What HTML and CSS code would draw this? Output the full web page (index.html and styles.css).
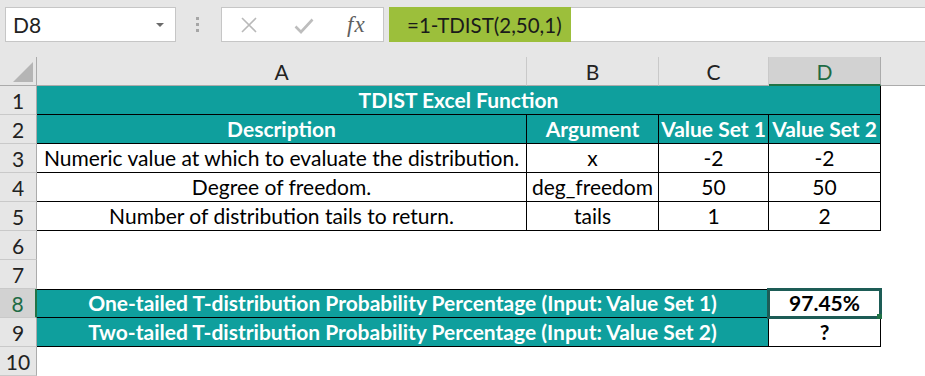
FILE: index.html
```html
<!DOCTYPE html>
<html lang="en">
<head>
<meta charset="utf-8">
<title>TDIST Excel Function</title>
<link rel="stylesheet" href="styles.css">
</head>
<body>
<div class="app">
  <div class="toolbar">
    <div class="namebox">
      <span class="ref">D8</span>
      <span class="caret"></span>
    </div>
    <div class="grip"><i></i><i></i><i></i></div>
    <div class="fbuttons">
      <svg class="ico-x" width="18" height="18" viewBox="0 0 18 18"><path d="M2 2 L16 16 M16 2 L2 16" stroke="#b9b9b9" stroke-width="1.6" fill="none"/></svg>
      <svg class="ico-ok" width="20" height="16" viewBox="0 0 20 16"><path d="M1.5 8.5 L7 14 L18.5 1.5" stroke="#bdbdbd" stroke-width="2.6" fill="none" stroke-linejoin="miter"/></svg>
      <span class="fx">fx</span>
    </div>
    <div class="formula"><span class="fval">=1-TDIST(2,50,1)</span></div>
  </div>

  <div class="sheet">
    <!-- column headers -->
    <div class="corner"><span class="tri"></span></div>
    <div class="colhead">A</div>
    <div class="colhead">B</div>
    <div class="colhead">C</div>
    <div class="colhead sel">D</div>
    <div class="colhead rest"></div>

    <!-- row 1 -->
    <div class="rowhead">1</div>
    <div class="cell teal bold span4 b-r b-b">TDIST Excel Function</div>
    <div class="cell"></div>

    <!-- row 2 -->
    <div class="rowhead">2</div>
    <div class="cell teal bold b-r b-b">Description</div>
    <div class="cell teal bold b-r b-b">Argument</div>
    <div class="cell teal bold b-r b-b">Value Set 1</div>
    <div class="cell teal bold b-r b-b">Value Set 2</div>
    <div class="cell"></div>

    <!-- row 3 -->
    <div class="rowhead">3</div>
    <div class="cell b-r b-b">Numeric value at which to evaluate the distribution.</div>
    <div class="cell b-r b-b">x</div>
    <div class="cell b-r b-b">-2</div>
    <div class="cell b-r b-b">-2</div>
    <div class="cell"></div>

    <!-- row 4 -->
    <div class="rowhead">4</div>
    <div class="cell b-r b-b">Degree of freedom.</div>
    <div class="cell b-r b-b">deg_freedom</div>
    <div class="cell b-r b-b">50</div>
    <div class="cell b-r b-b">50</div>
    <div class="cell"></div>

    <!-- row 5 -->
    <div class="rowhead">5</div>
    <div class="cell b-r b-b">Number of distribution tails to return.</div>
    <div class="cell b-r b-b">tails</div>
    <div class="cell b-r b-b">1</div>
    <div class="cell b-r b-b">2</div>
    <div class="cell"></div>

    <!-- rows 6-7 -->
    <div class="rowhead">6</div>
    <div class="cell span5"></div>
    <div class="rowhead">7</div>
    <div class="cell span5"></div>

    <!-- row 8 -->
    <div class="rowhead sel">8</div>
    <div class="cell teal bold span3 b-t b-r b-b">One-tailed T-distribution Probability Percentage (Input: Value Set 1)</div>
    <div class="cell bold b-t b-r b-b active">97.45%</div>
    <div class="cell"></div>

    <!-- row 9 -->
    <div class="rowhead">9</div>
    <div class="cell teal bold span3 b-r b-b">Two-tailed T-distribution Probability Percentage (Input: Value Set 2)</div>
    <div class="cell bold b-r b-b">?</div>
    <div class="cell"></div>

    <!-- row 10 -->
    <div class="rowhead">10</div>
    <div class="cell span5"></div>
  </div>
</div>
</body>
</html>
```

FILE: styles.css
```css
* { box-sizing: border-box; }

html, body {
  margin: 0;
  padding: 0;
}

body {
  width: 925px;
  height: 376px;
  overflow: hidden;
  background: #e6e6e6;
  font-family: "Lato", "Liberation Sans", sans-serif;
}

/* ---------- formula bar ---------- */
.toolbar {
  height: 57px;
  display: flex;
  align-items: flex-start;
  padding-top: 7px;
}

.namebox {
  margin-left: 5px;
  width: 171px;
  height: 35px;
  background: #fff;
  border: 1px solid #c6c6c6;
  display: flex;
  align-items: center;
  justify-content: space-between;
  padding: 0 11px 0 7px;
}

.namebox .ref {
  font-size: 21px;
  color: #222;
}

.caret {
  width: 0;
  height: 0;
  border-left: 4px solid transparent;
  border-right: 4px solid transparent;
  border-top: 4px solid #6a6a6a;
}

.grip {
  width: 45px;
  height: 35px;
  display: flex;
  flex-direction: column;
  align-items: center;
  justify-content: center;
  gap: 3px;
  padding-right: 2px;
}

.grip i {
  display: block;
  width: 3px;
  height: 3px;
  background: #a6a6a6;
}

.fbuttons {
  width: 163px;
  height: 35px;
  background: #fff;
  border: 1px solid #c6c6c6;
  display: flex;
  align-items: center;
  padding-left: 18px;
}

.ico-x { margin-right: 36px; }
.ico-ok { margin-right: 33px; margin-top: 2px; }

.fx {
  font-family: "Liberation Serif", "DejaVu Serif", serif;
  font-style: italic;
  font-size: 23px;
  color: #5f5f5f;
  letter-spacing: 1px;
}

.formula {
  margin-left: 5px;
  flex: 1;
  height: 35px;
  background: #fff;
  border-top: 1px solid #c6c6c6;
  border-bottom: 1px solid #c6c6c6;
  display: flex;
}

.fval {
  background: #9cbf3b;
  width: 182px;
  margin: -1px 0;
  padding-left: 18px;
  display: flex;
  align-items: center;
  font-size: 20.5px;
  color: #1a1a1a;
}

/* ---------- sheet grid ---------- */
.sheet {
  display: grid;
  grid-template-columns: 37px 490px 132px 110px 112px 44px;
  grid-auto-rows: 29px;
  background: #fff;
}

.corner {
  background: #e6e6e6;
  border-right: 1px solid #ababab;
  border-bottom: 1px solid #ababab;
  position: relative;
}

.tri {
  position: absolute;
  right: 3px;
  bottom: 3px;
  width: 0;
  height: 0;
  border-left: 20px solid transparent;
  border-bottom: 20px solid #b5b5b5;
}

.colhead {
  background: #e6e6e6;
  border-right: 1px solid #c9c9c9;
  border-bottom: 1px solid #ababab;
  display: flex;
  align-items: center;
  justify-content: center;
  font-size: 21px;
  color: #222;
  padding-top: 1px;
}

.colhead.rest { border-right: none; }

.colhead.sel {
  background: #d2d2d2;
  color: #1e6b45;
  border-bottom: 2px solid #217346;
  border-right-color: #ababab;
}

.rowhead {
  background: #e6e6e6;
  border-right: 1px solid #ababab;
  border-bottom: 1px solid #c9c9c9;
  display: flex;
  align-items: center;
  justify-content: center;
  font-size: 21px;
  color: #222;
}

.rowhead.sel {
  background: #d2d2d2;
  color: #1e6b45;
  border-right: 2px solid #217346;
}

.cell {
  display: flex;
  align-items: flex-end;
  justify-content: center;
  font-size: 21px;
  line-height: 1;
  padding-bottom: 4px;
  color: #000;
  white-space: nowrap;
  background: #fff;
}

.teal {
  background: #0f9f9d;
  color: #fff;
}

.bold { font-weight: 700; }

.span3 { grid-column: span 3; }
.span4 { grid-column: span 4; }
.span5 { grid-column: span 5; }

.b-r { border-right: 1px solid #000; }
.b-b { border-bottom: 1px solid #000; }
.b-t { border-top: 1px solid #000; }

/* active cell frame with its fill handle */
.active { position: relative; }

.active::after {
  content: "";
  position: absolute;
  left: -2px;
  top: -2px;
  right: -2px;
  bottom: -2px;
  border: 3px solid #1d5c56;
}

.active::before {
  content: "";
  position: absolute;
  right: -2px;
  bottom: -2px;
  width: 5px;
  height: 5px;
  background: #217346;
  z-index: 1;
}
```
